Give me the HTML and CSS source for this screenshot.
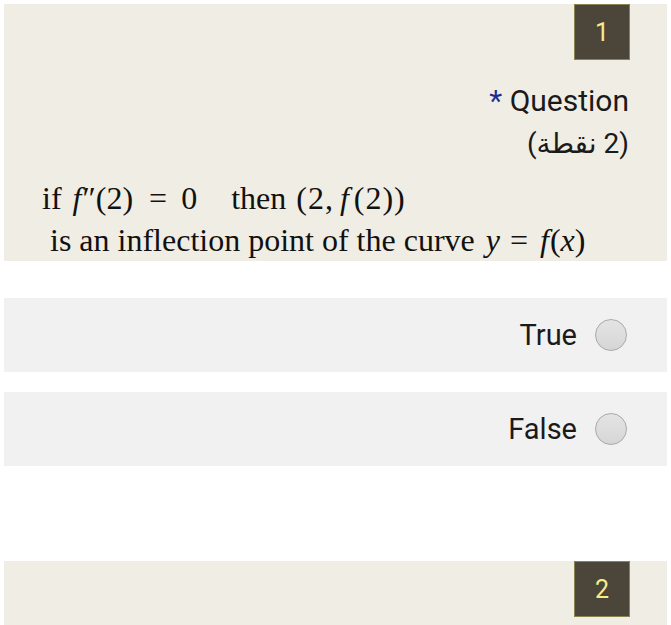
FILE: index.html
```html
<!DOCTYPE html>
<html lang="ar">
<head>
    <meta charset="UTF-8">
    <meta name="viewport" content="width=device-width, initial-scale=1.0">
    <title>Question 1</title>
    <link rel="stylesheet" href="styles.css">
</head>
<body>
    <div class="pagina">
        <div class="cartao pergunta">
            <div class="numero">1</div>
            <div class="titulo"><span class="obrigatorio">*</span> Question</div>
            <div class="pontos" dir="rtl">(2 نقطة)</div>
            <div class="enunciado">
                <div class="linha linha-1">if <i class="var">f</i>&Prime;(2)<span class="op op-largo">=</span>0<span class="espaco"></span>then <span class="par">(2,<i class="var larga">f</i>(2))</span></div>
                <div class="linha linha-2">is an inflection point of the curve <i class="var">y</i><span class="op">=</span><i class="var">f</i>(<i>x</i>)</div>
            </div>
        </div>

        <label class="opcao">
            <span class="rotulo">True</span>
            <span class="radio"></span>
        </label>
        <label class="opcao">
            <span class="rotulo">False</span>
            <span class="radio"></span>
        </label>

        <div class="cartao proxima">
            <div class="numero">2</div>
        </div>
    </div>
</body>
</html>
```

FILE: styles.css
```css
body {
    margin: 0;
    font-family: Roboto, "DejaVu Sans", sans-serif;
    background-color: #ffffff;
    color: #1a1a1a;
}

.pagina {
    display: flex;
    flex-direction: column;
    padding: 4px 4px 0 4px;
}

.cartao {
    background-color: #f0ede4;
    display: flex;
    flex-direction: column;
}

.numero {
    align-self: flex-end;
    margin-right: 37px;
    width: 56px;
    height: 56px;
    box-sizing: border-box;
    background-color: #4b4639;
    border: 1px solid #8a8250;
    color: #f6ec8c;
    font-size: 25px;
    display: flex;
    align-items: center;
    justify-content: center;
}

.titulo {
    text-align: right;
    padding-right: 38px;
    font-size: 30px;
    line-height: 36px;
    margin-top: 23px;
}

.obrigatorio {
    color: #1d2b8f;
}

.pontos {
    text-align: right;
    padding-right: 38px;
    font-size: 28px;
    line-height: 34px;
    margin-top: 8px;
}

.enunciado {
    font-family: "Liberation Serif", serif;
    font-size: 32px;
    color: #111111;
    padding-top: 16px;
}

.linha {
    line-height: 42px;
    white-space: nowrap;
}

.linha-1 {
    padding-left: 38px;
}

.linha-2 {
    padding-left: 46px;
}

.var {
    margin: 0 1px 0 3px;
}

.var.larga {
    margin: 0 4px 0 6px;
}

.op {
    margin: 0 9px;
}

.op.op-largo {
    margin: 0 14px 0 16px;
}

.par {
    margin-left: 2px;
    letter-spacing: 1px;
}

.espaco {
    display: inline-block;
    width: 34px;
}

.opcao {
    background-color: #f1f1f1;
    height: 74px;
    margin-top: 20px;
    display: flex;
    align-items: center;
    justify-content: flex-end;
    gap: 18px;
    padding-right: 40px;
}

.pergunta + .opcao {
    margin-top: 37px;
}

.rotulo {
    font-size: 29px;
}

.radio {
    width: 30px;
    height: 30px;
    border-radius: 50%;
    border: 1px solid #a9a9a9;
    background: linear-gradient(#e4e4e4, #d6d6d6);
}

.proxima {
    margin-top: 95px;
    height: 70px;
}
```
